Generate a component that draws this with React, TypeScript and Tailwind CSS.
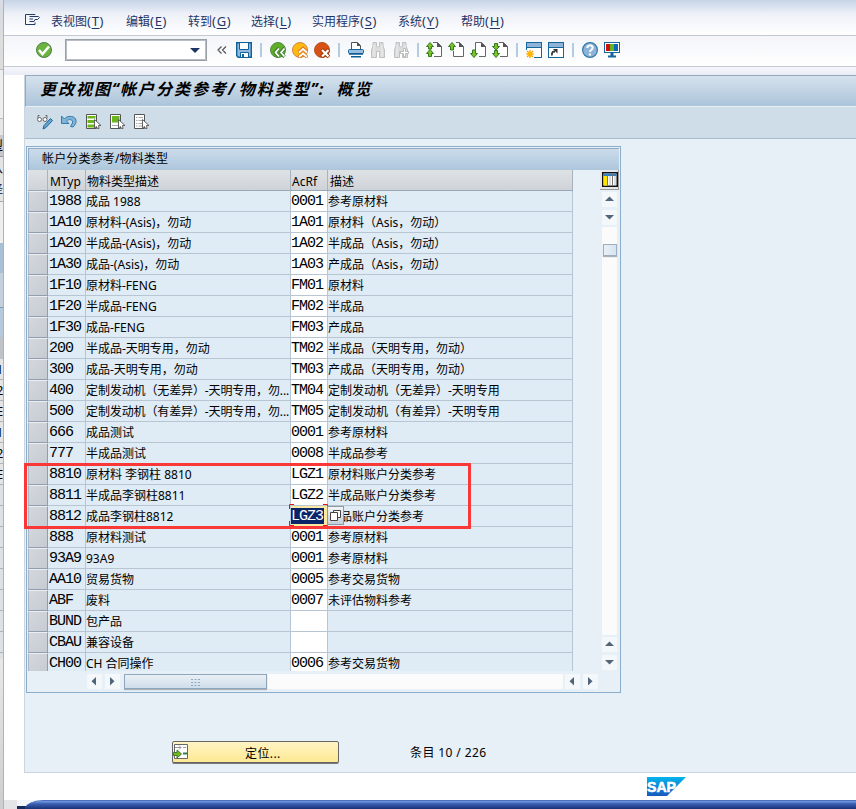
import React from "react";

const ui = "font-['Noto_Sans','Noto_Sans_CJK_SC',sans-serif]";
const mono = "font-['Liberation_Mono','Noto_Sans_CJK_SC',monospace]";

type IconProps = { children: React.ReactNode; className?: string; size?: number };
function Icon({ children, className = "", size = 16 }: IconProps) {
  return (
    <svg width={size} height={size} viewBox={`0 0 ${size} ${size}`} fill="none" className={`shrink-0 ${className}`}>
      {children}
    </svg>
  );
}

const menus: [string, string, string][] = [
  ["表视图", "T", "w-[75px]"],
  ["编辑", "E", "w-[62px]"],
  ["转到", "G", "w-[63px]"],
  ["选择", "L", "w-[61px]"],
  ["实用程序", "S", "w-[86px]"],
  ["系统", "Y", "w-[63px]"],
  ["帮助", "H", "w-[60px]"],
];

const rows: [string, string, string, string][] = [
  ["1988", "成品 1988", "0001", "参考原材料"],
  ["1A10", "原材料-(Asis)，勿动", "1A01", "原材料（Asis，勿动）"],
  ["1A20", "半成品-(Asis)，勿动", "1A02", "半成品（Asis，勿动）"],
  ["1A30", "成品-(Asis)，勿动", "1A03", "产成品（Asis，勿动）"],
  ["1F10", "原材料-FENG", "FM01", "原材料"],
  ["1F20", "半成品-FENG", "FM02", "半成品"],
  ["1F30", "成品-FENG", "FM03", "产成品"],
  ["200", "半成品-天明专用，勿动", "TM02", "半成品（天明专用，勿动）"],
  ["300", "成品-天明专用，勿动", "TM03", "产成品（天明专用，勿动）"],
  ["400", "定制发动机（无差异）-天明专用，勿...", "TM04", "定制发动机（无差异）-天明专用"],
  ["500", "定制发动机（有差异）-天明专用，勿...", "TM05", "定制发动机（有差异）-天明专用"],
  ["666", "成品测试", "0001", "参考原材料"],
  ["777", "半成品测试", "0008", "半成品参考"],
  ["8810", "原材料 李钢柱 8810", "LGZ1", "原材料账户分类参考"],
  ["8811", "半成品李钢柱8811", "LGZ2", "半成品账户分类参考"],
  ["8812", "成品李钢柱8812", "LGZ3", "产品账户分类参考"],
  ["888", "原材料测试", "0001", "参考原材料"],
  ["93A9", "93A9", "0001", "参考原材料"],
  ["AA10", "贸易货物", "0005", "参考交易货物"],
  ["ABF", "废料", "0007", "未评估物料参考"],
  ["BUND", "包产品", "", ""],
  ["CBAU", "兼容设备", "", ""],
  ["CH00", "CH 合同操作", "0006", "参考交易货物"],
];

function Separator({ className = "" }: { className?: string }) {
  return <div className={`h-[14px] w-[2px] shrink-0 bg-[#b3cce2] ${className}`} />;
}

function PageIcon({ dir, className }: { dir: "first" | "up" | "down" | "last"; className?: string }) {
  const outline =
    dir === "up"
      ? "M8 .5H11.5L15.5 4.5V14.5H5.5V9"
      : dir === "down"
        ? "M5.5 8V.5H11.5L15.5 4.5V14.5H9"
        : "M7 .5H11.5L15.5 4.5V14.5H8";
  return (
    <Icon className={className}>
      <path d={outline} fill="#fff" stroke="#666" />
      <path d="M11 0V5H16Z" fill="#555" />
      <g fill="#80c226" stroke="#2f7d22" strokeWidth="1">
        {dir === "first" && (
          <>
            <path d="M4 .5L7.5 4.5H5.5V7H2.5V4.5H.5Z" />
            <path d="M4 7.5L7.5 11.5H5.5V14.5H2.5V11.5H.5Z" />
          </>
        )}
        {dir === "up" && <path d="M4 .5L7.5 4.5H5.5V8H2.5V4.5H.5Z" />}
        {dir === "down" && <path d="M4 15.5L.5 11.5H2.5V8H5.5V11.5H7.5Z" />}
        {dir === "last" && (
          <>
            <path d="M4 8L.5 4.5H2.5V1.5H5.5V4.5H7.5Z" />
            <path d="M4 15.5L.5 11.5H2.5V8.5H5.5V11.5H7.5Z" />
          </>
        )}
      </g>
    </Icon>
  );
}

function Binoculars({ next = false, className }: { next?: boolean; className?: string }) {
  return (
    <Icon className={className}>
      <path
        d="M3 .5H6.500V4L7.500 5H8.500L9.500 4V.5H13V4L14.500 8V15.500H9.500V9.500H6.500V15.500H1.500V8L3 4Z"
        fill="#dcdcdc"
        stroke="#c0c0c0"
      />
      <path d="M4 3V14.500M12 3V14.500" stroke="#ededed" />
      {next && <path d="M10.500 6.500H12.500V9.500H15.500V11.500H12.500V14.500H10.500V11.500H7.500V9.500H10.500Z" fill="#fff" stroke="#bbb" />}
    </Icon>
  );
}

function RoundNav({ color, edge, className, children }: { color: string; edge: string; className?: string; children: React.ReactNode }) {
  return (
    <Icon className={className}>
      <circle cx="8" cy="8" r="7.5" fill={color} stroke={edge} />
      {children}
    </Icon>
  );
}

function WindowIcon({ className, children }: { className?: string; children: React.ReactNode }) {
  return (
    <Icon className={className}>
      <rect x=".5" y=".5" width="15" height="15" fill="#fff" stroke="#15679b" />
      <rect x="1" y="1" width="14" height="4" fill="#8fb4d8" />
      <path d="M1 5.5H15" stroke="#15679b" />
      {children}
    </Icon>
  );
}

function MenuBar() {
  return (
    <div className="flex h-[36px] shrink-0 items-start border-b border-[#c3cad3] bg-linear-to-b from-[#c6d4e7] via-[#eef1f8] via-40% to-white pl-[21px]">
      <Icon className="mt-[12px] mr-[10px]">
        <path d="M10 3V2.5H.5V12.5H10V10.500" stroke="#263c68" />
        <path d="M4.500 4.500H13.500L14.500 5.500L12.500 7.500H10L9 9.500H4.500M4.500 7H8" stroke="#263c68" />
      </Icon>
      {menus.map(([name, key, w]) => (
        <div key={name} className={`${w} mt-[13px] shrink-0 text-[12px] leading-[17px] whitespace-nowrap text-[#1f3567]`}>
          {name}
          <span className="text-[13px] tracking-[.7px]">
            (<span className="underline underline-offset-2">{key}</span>)
          </span>
        </div>
      ))}
    </div>
  );
}

function Toolbar() {
  return (
    <div className="flex h-[31px] shrink-0 items-center border-b border-[#c3cad3] bg-linear-to-b from-[#f3f5f9] to-white pb-[2px] pl-[32px]">
      <Icon>
        <circle cx="8" cy="8" r="7.5" fill="#6cb33f" stroke="#527f4d" />
        <path d="M3 8L6.5 12L13 4.5" stroke="#fff" strokeWidth="2.5" />
      </Icon>
      <div className="ml-[13px] flex h-[22px] w-[142px] shrink-0 items-center justify-end border border-[#9a9fa8] bg-white pr-[6px] shadow-[inset_0_0_0_1px_#b9bdc5]">
        <Icon size={10}>
          <path d="M0 3H10L5 8Z" fill="#1c3564" />
        </Icon>
      </div>
      <Icon className="ml-[7px]">
        <path d="M7.5 4.5L4 8L7.5 11.5M12 4.5L8.500 8L12 11.5" stroke="#555" strokeWidth="1.200" />
      </Icon>
      <Icon className="ml-[6px]">
        <path d="M.7 .7H15.300V15.300H2.200L.7 13.800Z" fill="#94b9da" stroke="#0f629a" strokeWidth="1.4" />
        <path d="M3.500 1V7.500H12.500V1" fill="#fff" stroke="#0f629a" />
        <path d="M4.500 15V10.500H12.500V15" fill="#fff" stroke="#0f629a" />
        <path d="M6 12H8V15H6Z" fill="#0f629a" />
      </Icon>
      <Separator className="ml-[8px]" />
      <RoundNav color="#5fae27" edge="#528b41" className="ml-[8px]">
        <path d="M9 6L5 10.500L9 15M14.500 6L10.500 10.500L14.500 15" stroke="#468032" strokeWidth="3.400" />
        <path d="M9 6.500L5.500 10.500L9 14.500M14.500 6.500L11 10.500L14.500 14.500" stroke="#fff" strokeWidth="1.700" />
      </RoundNav>
      <RoundNav color="#ffb914" edge="#cd8740" className="ml-[6px]">
        <path d="M6.500 10.500L11 6.500L15.500 10.500M6.500 15.500L11 11.500L15.500 15.500" stroke="#e37619" strokeWidth="3.400" />
        <path d="M7 10.500L11 7L15 10.500M7 15L11 11.500L15 15" stroke="#fff" strokeWidth="1.700" />
      </RoundNav>
      <RoundNav color="#d75215" edge="#b7501f" className="ml-[6px]">
        <path d="M7.500 7.500L15 15M15 7.500L7.500 15" stroke="#a93500" strokeWidth="4" />
        <path d="M8 8L14.500 14.500M14.500 8L8 14.500" stroke="#fff" strokeWidth="2.200" />
      </RoundNav>
      <Separator className="ml-[8px]" />
      <Icon className="ml-[8px]">
        <path d="M3.500 8V.5H9.500L12.500 3.500V8" fill="#fff" stroke="#555" />
        <path d="M9 0V4H13Z" fill="#555" />
        <rect x=".5" y="7.500" width="15" height="4" rx="1" fill="#9abddd" stroke="#15679b" />
        <path d="M1 12H15M3 14.800H13" stroke="#0d5b92" strokeWidth="1.600" />
      </Icon>
      <Binoculars className="ml-[6px]" />
      <Binoculars next className="ml-[7px]" />
      <Separator className="ml-[8px]" />
      <PageIcon dir="first" className="ml-[7px]" />
      <PageIcon dir="up" className="ml-[6px]" />
      <PageIcon dir="down" className="ml-[6px]" />
      <PageIcon dir="last" className="ml-[6px]" />
      <Separator className="ml-[8px]" />
      <WindowIcon className="ml-[8px]">
        <path d="M0 8H8V16H0Z" fill="#fff" />
        <path d="M4 8V16M0 12H8M1 9L7 15M7 9L1 15" stroke="#f59b00" strokeWidth="1.200" />
        <circle cx="4" cy="12" r="2.500" fill="#ffb600" />
      </WindowIcon>
      <WindowIcon className="ml-[6px]">
        <path d="M4 13.500C3.500 10 5 9.500 7 9.500" stroke="#333" strokeWidth="1.800" />
        <path d="M5 7H9.500V11.500Z" fill="#333" />
      </WindowIcon>
      <Separator className="ml-[8px]" />
      <Icon className="ml-[8px]">
        <circle cx="8" cy="8" r="7.400" fill="#8db3d8" stroke="#347aaa" strokeWidth="1.200" />
        <path d="M5.300 6C5.300 2.500 10.700 2.600 10.700 5.700C10.700 7.700 8 7.700 8 10" stroke="#fff" strokeWidth="2" />
        <path d="M7 11.500H9V13.500H7Z" fill="#fff" />
      </Icon>
      <Icon className="ml-[6px]">
        <rect x=".5" y=".5" width="15" height="10" fill="#fff" stroke="#15679b" />
        <path d="M2 2H6V9H2Z" fill="#d2100f" />
        <path d="M6 2H10V9H6Z" fill="#67b322" />
        <path d="M10 2H14V9H10Z" fill="#0b6ab5" />
        <path d="M6.500 11H9.500V13.500H12V15.500H4V13.500H6.500Z" fill="#15679b" />
      </Icon>
    </div>
  );
}

function SelectPointer() {
  return <path d="M8.500 5.500V14L10.500 12.500L11.500 14.500H13L12.500 11.500H15Z" fill="#fff" stroke="#555" strokeWidth=".9" />;
}

function AppToolbar() {
  return (
    <div className="flex h-[32px] shrink-0 items-center border-b border-[#abbccb] bg-[#cfdde8] pb-[2px] pl-[12px]">
      <Icon>
        <path d="M1 4V1.500H2.500M10 4V1.500H8.500" stroke="#666" />
        <circle cx="2.500" cy="5.500" r="2" fill="#fff" stroke="#666" />
        <circle cx="8" cy="5.500" r="2" fill="#fff" stroke="#666" />
        <path d="M6 15L7 11.500L13.500 4.500L15.500 6.500L9 13.500Z" fill="#6ba5cf" stroke="#16669b" />
      </Icon>
      <Icon className="ml-[8px]">
        <path d="M.5 2V9.500H8L5.500 7C8 4.500 12.500 5.500 11.500 9L9.500 12.500L12 13C17 8.500 15.500 3 10.500 2.500C7 2 5 3 3.500 5Z" fill="#82b4d7" stroke="#317daf" />
      </Icon>
      <Icon className="ml-[9px]">
        <path d="M.5.5H10.500V14.500H.5Z" fill="#fff" stroke="#555" />
        <path d="M1.500 2H9.500V4.500H1.500ZM1.500 6H9.500V9H1.500ZM1.500 10.500H9.500V13.500H1.500Z" fill="#6cb61d" />
        <SelectPointer />
      </Icon>
      <Icon className="ml-[8px]">
        <path d="M.5.5H10.500V14.500H.5Z" fill="#fff" stroke="#555" />
        <path d="M2 2H9.500V8.500H2Z" fill="#6cb61d" />
        <path d="M2 11.500H9" stroke="#aaa" />
        <SelectPointer />
      </Icon>
      <Icon className="ml-[8px]">
        <path d="M.5.5H10.500V14.500H.5Z" fill="#fff" stroke="#555" />
        <path d="M2 3.500H3.500M4.500 3.500H9M2 6.500H3.500M4.500 6.500H9M2 9.500H3.500M4.500 9.500H9M2 12H3.500M4.500 12H9" stroke="#aaa" />
        <SelectPointer />
      </Icon>
    </div>
  );
}

const arrows = {
  up: "M3 9L7.500 4.500L12 9Z",
  down: "M3 5H12L7.500 9.500Z",
  left: "M9 3V11.500L4.500 7.250Z",
  right: "M5 3V11.500L9.500 7.250Z",
};
function ScrollButton({ dir, className = "" }: { dir: keyof typeof arrows; className?: string }) {
  return (
    <div className={`h-[15px] w-[15px] shrink-0 bg-[#f5f8fa] ${className}`}>
      <Icon size={15}>
        <path d={arrows[dir]} fill="#50647a" />
      </Icon>
    </div>
  );
}

function ReferenceCell() {
  return (
    <div className="relative h-full w-[36px] bg-[#fce9a1] pt-[2px]">
      <div className={`${mono} h-[16px] w-[33px] bg-[#0a246a] text-[15px] leading-[18px] tracking-[-1px] text-white`}>LGZ3</div>
      <svg className="absolute -top-[2px] -left-[2px]" width="40" height="22" fill="none">
        <path d="M.5 5V.5H5M34 .5H38.500V5M.5 17V21.500H5M34 21.500H38.500V17" stroke="#e01818" />
      </svg>
      <div className="absolute top-0 left-[36px] flex h-[19px] w-[17px] items-center justify-center border border-[#8d99a5] bg-linear-to-b from-[#f4f6f8] to-[#c4cedb]">
        <Icon size={13}>
          <path d="M4.500 1.500H11.500V8.500H4.500Z" fill="#fff" stroke="#444" />
          <path d="M1.500 3.500H8.500V11.500H1.500Z" fill="#fff" stroke="#444" />
        </Icon>
      </div>
    </div>
  );
}

const headCell = "h-[20px] border-r border-[#a9b3be] pt-[3px] text-[12px] leading-[17px] whitespace-nowrap";

function Grid() {
  return (
    <div className="h-[501px] w-[545px] shrink-0 overflow-hidden">
      <div className="flex h-[21px] border-b border-[#9aa9ba] bg-linear-to-b from-[#dfe2e5] to-[#cfd3d8]">
        <div className={`${headCell} w-[20px]`} />
        <div className={`${headCell} w-[38px] pl-[2px]`}>MTyp</div>
        <div className={`${headCell} w-[205px] pl-px`}>物料类型描述</div>
        <div className={`${headCell} w-[37px] pl-px`}>AcRf</div>
        <div className={`${headCell} w-[245px] pl-[2px]`}>描述</div>
      </div>
      {rows.map(([code, desc, ref, refDesc]) => (
        <div key={code} className="flex h-[21px] text-[12px] leading-[20px] whitespace-nowrap text-black">
          <div className="w-[20px] shrink-0 border border-t-[#eceef1] border-r-[#8d9db3] border-b-[#929eaf] border-l-[#aab7c5] bg-linear-to-br from-[#d4d8dd] to-[#c6cbd2]" />
          <div className={`${mono} w-[38px] shrink-0 border-r border-b border-[#b8c5d3] bg-[#dfebf5] pl-px text-[15px] leading-[21px] tracking-[-1px]`}>{code}</div>
          <div className={`w-[205px] shrink-0 border-r border-b border-[#b8c5d3] bg-[#dfebf5] pt-[2px] leading-[18px] ${desc.endsWith("...") ? "tracking-[-.12px]" : ""}`}>{desc}</div>
          <div className={`${mono} w-[37px] shrink-0 border-r border-b border-[#b8c5d3] bg-white text-[15px] leading-[21px] tracking-[-1px]`}>
            {ref === "LGZ3" ? <ReferenceCell /> : ref}
          </div>
          <div className="w-[245px] shrink-0 border-r border-b border-[#b8c5d3] bg-[#dfebf5] pt-[2px] leading-[18px]">{refDesc}</div>
        </div>
      ))}
    </div>
  );
}

function TablePanel() {
  return (
    <div className="flex h-[547px] w-[595px] flex-col border border-[#8caecd] bg-[#e8f0f7] p-px">
      <div className="h-[22px] shrink-0 border-t border-l border-[#91a9c3] bg-linear-to-b from-[#cbdceb] to-[#adc6dc] pl-[13px] text-[12px] leading-[20px] tracking-[.15px]">
        帐户分类参考/物料类型
      </div>
      <div className="flex">
        <Grid />
        <div className="ml-[27px] flex h-[501px] w-[19px] flex-col">
          <div className="flex h-[20px] w-[19px] shrink-0 items-center justify-center border-r border-b border-[#999] bg-[#e5e7e9] pl-px">
            <Icon size={16}>
              <path d="M.75 .75H15.250V14.250H.75Z" fill="#fff" stroke="#111" strokeWidth="1.500" />
              <path d="M1.500 1.500H14.500V4H1.500Z" fill="#337fbd" />
              <path d="M1.500 4H5V13.500H1.500Z" fill="#ffe600" />
              <path d="M5.500 2V13.500M10.500 2V13.500" stroke="#777" />
              <path d="M7 4H9V13H7ZM12 4H14V13H12Z" fill="#ddd" />
            </Icon>
          </div>
          <ScrollButton dir="up" className="mt-[2px] ml-[2px]" />
          <ScrollButton dir="down" className="mt-[3px] ml-[2px]" />
          <div className="mt-[2px] ml-[2px] h-[408px] w-[15px] shrink-0 bg-[#fbfbfb] pt-[17px]">
            <div className="ml-px h-[12px] w-[14px] border border-[#9dafc0] bg-linear-to-r from-[#e9f0f6] to-[#d8e4ef] shadow-[0_1px_1px_#a8b3bd]" />
          </div>
          <ScrollButton dir="up" className="mt-[2px] ml-[2px]" />
          <ScrollButton dir="down" className="mt-[3px] ml-[2px]" />
        </div>
      </div>
      <div className="mt-[3px] flex h-[15px] pl-[59px]">
        <ScrollButton dir="left" />
        <ScrollButton dir="right" className="ml-[3px]" />
        <div className="ml-[3px] flex w-[440px] bg-[#fbfbfb]">
          <div className="ml-px flex w-[143px] items-center justify-center border border-[#8fa5b9] bg-linear-to-b from-[#e9f0f6] to-[#cfdeea] shadow-[0_1px_1px_#a8b3bd]">
            <Icon size={10}>
              <path d="M0 2.500H10M0 5.500H10M0 8.500H10" stroke="#91a7bb" strokeDasharray="2 1.500" />
            </Icon>
          </div>
        </div>
        <ScrollButton dir="left" className="ml-[2px]" />
        <ScrollButton dir="right" className="ml-[3px]" />
      </div>
    </div>
  );
}

function BackgroundStrip() {
  return (
    <div className="flex w-[4px] shrink-0 flex-col overflow-hidden border-r border-[#aeb3b8] bg-[#e4e4e4] text-[13px] leading-[21px]">
      <div className="h-[33px] shrink-0 bg-[#d9dce0]" />
      <div className="h-[36px] shrink-0 bg-[#ddd]" />
      <div className="h-[50px] shrink-0 border-y border-[#bbb] bg-[#eee]" />
      <div className="h-[16px] shrink-0 bg-[#e6e6e6]" />
      <div className="h-[22px] shrink-0 border-b border-[#999] bg-[#c5c8cd]">
        <span className="-ml-[10px]">型</span>
      </div>
      <div className="h-[22px] shrink-0">
        <span className="-ml-[10px]">从</span>
      </div>
      <div className="h-[23px] shrink-0 border-b border-[#aaa] text-[#263c68]">
        <span className="-ml-[10px]">择</span>
      </div>
      <div className="h-[41px] shrink-0 bg-[#eee]" />
      <div className="h-[30px] shrink-0 bg-[#a9bfd6]" />
      <div className="h-[34px] shrink-0 bg-[#c4d1dc]" />
      <div className="h-[30px] shrink-0 border-t border-[#7999b9] bg-[#b5c9dc]" />
      <div className="h-[22px] shrink-0 bg-[#bfc2c6]" />
      {["1", "2", "E", "1", "2", "E"].map((label, i) => (
        <div key={i} className="h-[21px] shrink-0 border-b border-[#aab4be]">
          <span className="-ml-[4px]">{label}</span>
        </div>
      ))}
      <div className="h-[174px] shrink-0 bg-[linear-gradient(#dde1e5_20px,#aab4be_20px)] bg-[length:4px_21px]" />
      <div className="flex-1 bg-linear-to-b from-[#e8e8e8] to-[#cecece]" />
    </div>
  );
}

export default function App() {
  return (
    <div className={`${ui} relative flex h-[809px] w-[856px] overflow-hidden bg-[#dedede] text-black`}>
      <BackgroundStrip />
      <div className="flex w-[852px] flex-col">
        <div className="flex h-[800px] shrink-0 flex-col bg-white">
          <MenuBar />
          <Toolbar />
          <div className="h-[8px] shrink-0 bg-linear-to-b from-[#f6f7fb] to-[#e8ecf4]" />
          <div className="ml-[20px] flex h-[698px] shrink-0 flex-col border-b border-l border-[#cbd5df] bg-[#e8f0f7]">
            <div className="flex h-[32px] shrink-0 items-start border-t border-b border-l border-t-[#96a8bb] border-b-[#e8eff5] border-l-[#96a8bb] bg-linear-to-b from-[#d5e2ed] to-[#acc4da] pl-[14px]">
              <h1 className="text-[16px] leading-[27px] font-bold tracking-[2px] whitespace-nowrap italic">
                更改视图<span className="tracking-[1px]">“</span>帐户分类参考<span className="mr-[2px]">/</span>物料类型<span className="tracking-[1px]">”</span>:<span className="ml-[5px]"> 概览</span>
              </h1>
            </div>
            <AppToolbar />
            <div className="pt-[7px] pl-px">
              <TablePanel />
              <div className="mt-[48px] flex h-[22px] items-center">
                <button className="ml-[146px] flex h-[22px] w-[167px] shrink-0 items-center rounded-[2px] border border-[#666] bg-linear-to-b from-[#fff4c3] to-[#fde992] text-[12px] shadow-[0_1px_0_#777]">
                  <Icon>
                    <path d="M1.500.5H14.500V14.500H1.500Z" fill="#fff" stroke="#666" />
                    <path d="M2 3.500H8M10 3.500H13M6 1.500L8 3.500L6 5.500" stroke="#999" />
                    <path d="M10 9.500H14" stroke="#367a50" strokeWidth="2" />
                    <path d="M.5 8.500H4V6L8.500 10L4 14V11.500H.5Z" fill="#75b51e" stroke="#357e2a" />
                  </Icon>
                  <span className="ml-[56px] pt-[3px] tracking-[.4px]">定位...</span>
                </button>
                <div className="ml-[71px] pt-[2px] text-[12px] tracking-[.4px] whitespace-nowrap">条目 10 / 226</div>
              </div>
            </div>
          </div>
          <div className="h-[27px] shrink-0 pt-[4px] pl-[643px]">
            <svg width="39" height="19" viewBox="0 0 39 19">
              <defs>
                <linearGradient id="brand" x1="0" y1="0" x2="0" y2="1">
                  <stop stopColor="#00b5ed" />
                  <stop offset="1" stopColor="#185abd" />
                </linearGradient>
              </defs>
              <path d="M0 0H39L20 19H0Z" fill="url(#brand)" />
              <text x="0" y="15" textLength="29" lengthAdjust="spacingAndGlyphs" fontFamily="Liberation Sans, sans-serif" fontSize="15.5" fontWeight="700" fill="#fff" stroke="#fff" strokeWidth=".6">
                SAP
              </text>
            </svg>
          </div>
        </div>
        <div className="flex h-[9px] shrink-0 bg-[linear-gradient(#f3f5f8_6px,#14295c_6px)]">
          <div className="h-[9px] w-[13px] shrink-0 bg-[#e4e5e7]" />
          <div className="ml-[8px] h-[9px] flex-1 rounded-tl-[18px_9px] border-t border-[#4a70bd] bg-linear-to-b from-[#7ba0e3] via-[#3c60b3] via-35% to-[#183176]" />
        </div>
      </div>
      <div className="absolute top-[463px] left-[24px] h-[66px] w-[447px] border-3 border-[#fa3838]" />
    </div>
  );
}
